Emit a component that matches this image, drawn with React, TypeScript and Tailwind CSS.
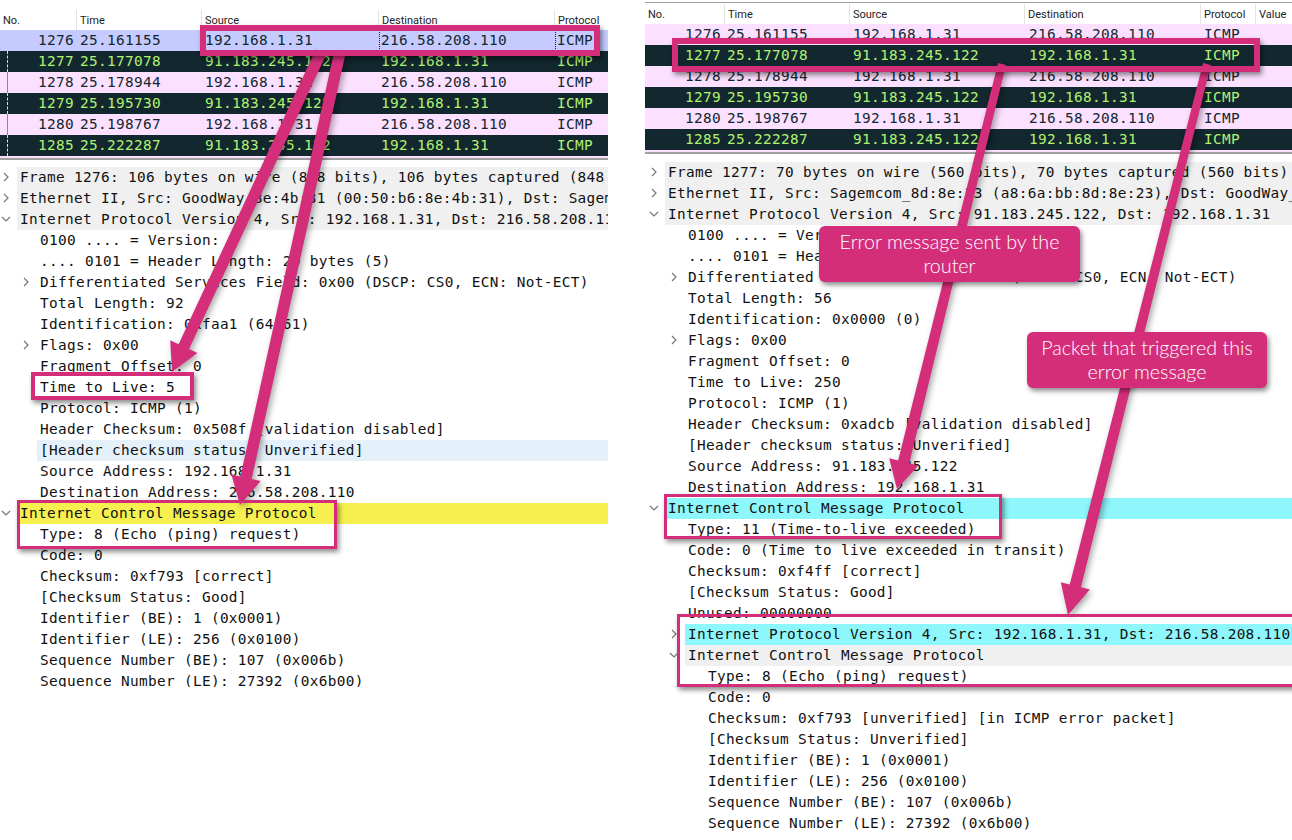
import React from 'react';

const mono = "font-['DejaVu_Sans_Mono',monospace] text-[14.4px] tracking-[0.33px]";

type Kind = 'sel' | 'dark' | 'pink';
type Pkt = { no: string; time: string; src: string; dst: string; proto: string; kind: Kind };

const packets = (first: 'sel' | 'pink'): Pkt[] => [
   { no: '1276', time: '25.161155', src: '192.168.1.31', dst: '216.58.208.110', proto: 'ICMP', kind: first },
   { no: '1277', time: '25.177078', src: '91.183.245.122', dst: '192.168.1.31', proto: 'ICMP', kind: 'dark' },
   { no: '1278', time: '25.178944', src: '192.168.1.31', dst: '216.58.208.110', proto: 'ICMP', kind: 'pink' },
   { no: '1279', time: '25.195730', src: '91.183.245.122', dst: '192.168.1.31', proto: 'ICMP', kind: 'dark' },
   { no: '1280', time: '25.198767', src: '192.168.1.31', dst: '216.58.208.110', proto: 'ICMP', kind: 'pink' },
   { no: '1285', time: '25.222287', src: '91.183.245.122', dst: '192.168.1.31', proto: 'ICMP', kind: 'dark' },
];

type Line = { text: string; level: 0 | 1 | 2; arrow?: 'closed' | 'open'; bg?: string };

const leftTree: Line[] = [
   { text: 'Frame 1276: 106 bytes on wire (848 bits), 106 bytes captured (848 bits)', level: 0, arrow: 'closed', bg: 'bg-[#f0f0f0]' },
   { text: 'Ethernet II, Src: GoodWay_8e:4b:31 (00:50:b6:8e:4b:31), Dst: Sagemcom_8d:8e:23', level: 0, arrow: 'closed', bg: 'bg-[#f0f0f0]' },
   { text: 'Internet Protocol Version 4, Src: 192.168.1.31, Dst: 216.58.208.110', level: 0, arrow: 'open', bg: 'bg-[#f0f0f0]' },
   { text: '0100 .... = Version: 4', level: 1 },
   { text: '.... 0101 = Header Length: 20 bytes (5)', level: 1 },
   { text: 'Differentiated Services Field: 0x00 (DSCP: CS0, ECN: Not-ECT)', level: 1, arrow: 'closed' },
   { text: 'Total Length: 92', level: 1 },
   { text: 'Identification: 0xfaa1 (64161)', level: 1 },
   { text: 'Flags: 0x00', level: 1, arrow: 'closed' },
   { text: 'Fragment Offset: 0', level: 1 },
   { text: 'Time to Live: 5', level: 1 },
   { text: 'Protocol: ICMP (1)', level: 1 },
   { text: 'Header Checksum: 0x508f [validation disabled]', level: 1 },
   { text: '[Header checksum status: Unverified]', level: 1, bg: 'bg-[#e4f1fb]' },
   { text: 'Source Address: 192.168.1.31', level: 1 },
   { text: 'Destination Address: 216.58.208.110', level: 1 },
   { text: 'Internet Control Message Protocol', level: 0, arrow: 'open', bg: 'bg-[#f5f04f]' },
   { text: 'Type: 8 (Echo (ping) request)', level: 1 },
   { text: 'Code: 0', level: 1 },
   { text: 'Checksum: 0xf793 [correct]', level: 1 },
   { text: '[Checksum Status: Good]', level: 1 },
   { text: 'Identifier (BE): 1 (0x0001)', level: 1 },
   { text: 'Identifier (LE): 256 (0x0100)', level: 1 },
   { text: 'Sequence Number (BE): 107 (0x006b)', level: 1 },
   { text: 'Sequence Number (LE): 27392 (0x6b00)', level: 1 },
];

const rightTree: Line[] = [
   { text: 'Frame 1277: 70 bytes on wire (560 bits), 70 bytes captured (560 bits)', level: 0, arrow: 'closed', bg: 'bg-[#f0f0f0]' },
   { text: 'Ethernet II, Src: Sagemcom_8d:8e:23 (a8:6a:bb:8d:8e:23), Dst: GoodWay_8e:4b:31', level: 0, arrow: 'closed', bg: 'bg-[#f0f0f0]' },
   { text: 'Internet Protocol Version 4, Src: 91.183.245.122, Dst: 192.168.1.31', level: 0, arrow: 'open', bg: 'bg-[#f0f0f0]' },
   { text: '0100 .... = Version: 4', level: 1 },
   { text: '.... 0101 = Header Length: 20 bytes (5)', level: 1 },
   { text: 'Differentiated Services Field: 0x00 (DSCP: CS0, ECN: Not-ECT)', level: 1, arrow: 'closed' },
   { text: 'Total Length: 56', level: 1 },
   { text: 'Identification: 0x0000 (0)', level: 1 },
   { text: 'Flags: 0x00', level: 1, arrow: 'closed' },
   { text: 'Fragment Offset: 0', level: 1 },
   { text: 'Time to Live: 250', level: 1 },
   { text: 'Protocol: ICMP (1)', level: 1 },
   { text: 'Header Checksum: 0xadcb [validation disabled]', level: 1 },
   { text: '[Header checksum status: Unverified]', level: 1 },
   { text: 'Source Address: 91.183.245.122', level: 1 },
   { text: 'Destination Address: 192.168.1.31', level: 1 },
   { text: 'Internet Control Message Protocol', level: 0, arrow: 'open', bg: 'bg-[#8ef7fb]' },
   { text: 'Type: 11 (Time-to-live exceeded)', level: 1 },
   { text: 'Code: 0 (Time to live exceeded in transit)', level: 1 },
   { text: 'Checksum: 0xf4ff [correct]', level: 1 },
   { text: '[Checksum Status: Good]', level: 1 },
   { text: 'Unused: 00000000', level: 1 },
   { text: 'Internet Protocol Version 4, Src: 192.168.1.31, Dst: 216.58.208.110', level: 1, arrow: 'closed', bg: 'bg-[#8ef7fb]' },
   { text: 'Internet Control Message Protocol', level: 1, arrow: 'open', bg: 'bg-[#f0f0f0]' },
   { text: 'Type: 8 (Echo (ping) request)', level: 2 },
   { text: 'Code: 0', level: 2 },
   { text: 'Checksum: 0xf793 [unverified] [in ICMP error packet]', level: 2 },
   { text: '[Checksum Status: Unverified]', level: 2 },
   { text: 'Identifier (BE): 1 (0x0001)', level: 2 },
   { text: 'Identifier (LE): 256 (0x0100)', level: 2 },
   { text: 'Sequence Number (BE): 107 (0x006b)', level: 2 },
   { text: 'Sequence Number (LE): 27392 (0x6b00)', level: 2 },
];

const Chevron = ({ open }: { open: boolean }) => (
   <svg width="10" height="10" viewBox="0 0 10 10" fill="none" stroke="#777" strokeWidth="1.2">
      <path d={open ? 'M1 3 L5 7 L9 3' : 'M3 1 L7 5 L3 9'} />
   </svg>
);

const TreeRow = ({ line }: { line: Line }) => {
   const spacer = line.level === 0 ? 'w-0' : line.level === 1 ? 'w-[20px]' : 'w-[40px]';
   return (
      <div className="flex h-[21px]">
         <div className={`${spacer} shrink-0`} />
         <div className="w-[17px] shrink-0 pl-[1px] pt-[5px]">
            {line.arrow && <Chevron open={line.arrow === 'open'} />}
         </div>
         <div className={`flex-1 min-w-0 pl-[3px] leading-[21px] whitespace-pre overflow-hidden ${line.bg ?? ''}`}>{line.text}</div>
      </div>
   );
};

const rowStyle = {
   sel: 'bg-[#c6cbff] text-[#12272e]',
   dark: 'bg-[#12272e] text-[#b0f272]',
   pink: 'bg-[#fce0ff] text-[#12272e]',
};

const markerStyle = {
   sel: 'border-transparent',
   dark: 'border-dashed border-[#e6e6a8]',
   pink: 'border-[#8a8a8a]',
};

const Packets = ({ rows, w, marker }: { rows: Pkt[]; w: string[]; marker?: boolean }) => (
   <div className={mono}>
      {rows.map((p) => {
         const focus = p.kind === 'sel' ? 'border-l border-dotted border-[#222] indent-[-1px]' : '';
         return (
            <div key={p.no} className={`flex h-[21px] leading-[20px] whitespace-pre ${rowStyle[p.kind]}`}>
               <div className={`${w[0]} text-right pr-[3px]`}>
                  {marker ? <div className={`ml-[7px] h-full border-l ${markerStyle[p.kind]}`}>{p.no}</div> : p.no}
               </div>
               <div className={`${w[1]} pl-[3px]`}>{p.time}</div>
               <div className={`${w[2]} pl-[3px]`}>{p.src}</div>
               <div className={`${w[3]} ${focus}`}>{p.dst}</div>
               <div className={`${w[4]} ${focus}`}>{p.proto}</div>
            </div>
         );
      })}
   </div>
);

const Header = ({ cols }: { cols: [string, string][] }) => (
   <div className="flex h-[20px] font-['Roboto',sans-serif] text-[11px] text-[#222] leading-[22px]">
      {cols.map(([label, width]) => (
         <div key={label} className={`${width} pl-[3px] border-r border-[#e2e2e2] last:border-r-0 whitespace-pre`}>{label}</div>
      ))}
   </div>
);

const Box = ({ className }: { className: string }) => (
   <div className={`absolute border-[#d42e7b] shadow-[2px_3px_5px_rgba(0,0,0,0.45)] ${className}`} />
);

// seta reta com cabeca triangular; a haste pode afinar em direcao a origem
const arrow = (x1: number, y1: number, x2: number, y2: number, sw1: number, sw2: number, hw: number, hl: number) => {
   const dx = x2 - x1;
   const dy = y2 - y1;
   const len = Math.hypot(dx, dy);
   const ux = dx / len;
   const uy = dy / len;
   const nx = -uy;
   const ny = ux;
   const bx = x2 - ux * hl;
   const by = y2 - uy * hl;
   const pts = [
      [x1 + (nx * sw1) / 2, y1 + (ny * sw1) / 2],
      [bx + (nx * sw2) / 2, by + (ny * sw2) / 2],
      [bx + (nx * hw) / 2, by + (ny * hw) / 2],
      [x2, y2],
      [bx - (nx * hw) / 2, by - (ny * hw) / 2],
      [bx - (nx * sw2) / 2, by - (ny * sw2) / 2],
      [x1 - (nx * sw1) / 2, y1 - (ny * sw1) / 2],
   ];
   return pts.map((p) => p.join(',')).join(' ');
};

const arrows = [
   arrow(321, 52, 172, 372, 11.5, 11.5, 30, 28),
   arrow(340, 52, 240, 505, 11.5, 11.5, 30, 28),
   arrow(1002, 64, 897, 489, 8, 11.5, 30, 28),
   arrow(1207, 64, 1068, 615, 8, 11.5, 30, 30),
];

const callout = "absolute h-[56px] rounded-[6px] bg-[#d42e7b] shadow-[2px_3px_5px_rgba(0,0,0,0.45)] flex items-center justify-center text-center text-white font-['Lato',sans-serif] font-light text-[19.7px] leading-[24px]";

export default function App() {
   return (
      <div className="relative w-[1292px] h-[840px] overflow-hidden bg-white text-[#111]">
         <div className="flex">
            {/* PAINEL ESQUERDO */}
            <div className="w-[608px] shrink-0 pt-[10px]">
               <Header cols={[['No.', 'w-[77px]'], ['Time', 'w-[125px]'], ['Source', 'w-[177px]'], ['Destination', 'w-[176px]'], ['Protocol', 'w-[53px]']]} />
               <Packets marker rows={packets('sel')} w={['w-[77px]', 'w-[125px]', 'w-[177px]', 'w-[176px] pl-[2px]', 'w-[53px] pl-[2px]']} />
               <div className="h-[4px] bg-[#fce0ff] border-b-2 border-[#a0a0a0]" />
               <div className={`mt-[7px] h-[520px] overflow-hidden ${mono}`}>
                  {leftTree.map((l, i) => <TreeRow key={i} line={l} />)}
               </div>
            </div>

            {/* PAINEL DIREITO */}
            <div className="ml-[37px] flex-1 min-w-0 pt-[2px]">
               <div className="border-t border-[#a0a0a0] h-[22px] pt-[1px]">
                  <Header cols={[['No.', 'w-[80px]'], ['Time', 'w-[125px]'], ['Source', 'w-[175px]'], ['Destination', 'w-[176px]'], ['Protocol', 'w-[55px]'], ['Value', 'w-[36px]']]} />
               </div>
               <Packets rows={packets('pink')} w={['w-[79px]', 'w-[126px]', 'w-[175px]', 'w-[176px] pl-[4px]', 'w-[55px] pl-[3px]']} />
               <div className="h-[4px] bg-[#fce0ff] border-b-2 border-[#a0a0a0]" />
               <div className={`mt-[8px] pl-[3px] overflow-hidden ${mono}`}>
                  {rightTree.map((l, i) => <TreeRow key={i} line={l} />)}
               </div>
            </div>
         </div>

         {/* SETAS */}
         <svg className="absolute left-0 top-0 drop-shadow-[2px_3px_3px_rgba(0,0,0,0.35)]" width="1292" height="840" viewBox="0 0 1292 840">
            {arrows.map((pts) => <polygon key={pts} points={pts} fill="#d42e7b" />)}
         </svg>

         {/* CAIXAS */}
         <Box className="left-[200px] top-[25px] w-[400px] h-[31px] border-[6px]" />
         <Box className="left-[31px] top-[372px] w-[163px] h-[28px] border-[4px]" />
         <Box className="left-[17px] top-[500px] w-[320px] h-[49px] border-[3px]" />
         <Box className="left-[672px] top-[38px] w-[588px] h-[34px] border-[6px]" />
         <Box className="left-[664px] top-[494px] w-[338px] h-[45px] border-[3px]" />
         <Box className="left-[677px] top-[614px] w-[620px] h-[73px] border-[3px]" />

         {/* ANOTACOES */}
         <div className={`${callout} left-[819px] top-[226px] w-[261px]`}>
            Error message sent by the<br />router
         </div>
         <div className={`${callout} left-[1027px] top-[332px] w-[240px]`}>
            Packet that triggered this<br />error message
         </div>
      </div>
   );
}
